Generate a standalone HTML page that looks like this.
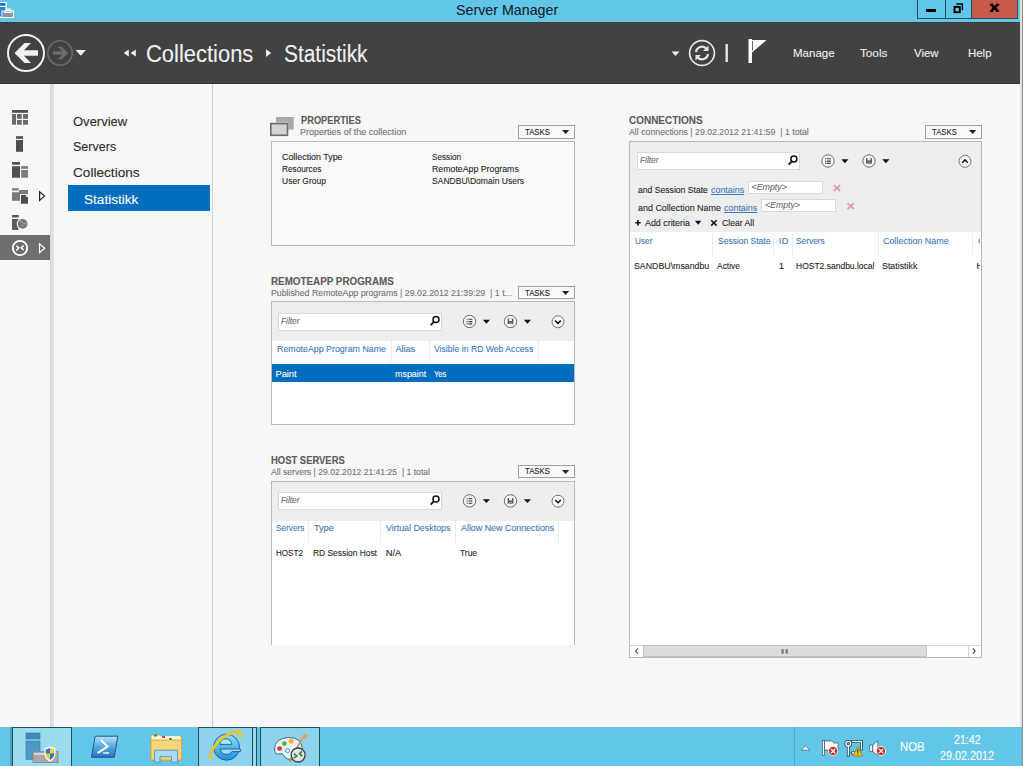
<!DOCTYPE html>
<html><head><meta charset="utf-8"><style>
*{margin:0;padding:0;box-sizing:border-box}
html,body{width:1023px;height:766px;overflow:hidden;background:#f7f7f7;font-family:"Liberation Sans",sans-serif;position:relative}
.a{position:absolute}
.t{position:absolute;white-space:nowrap;line-height:1;-webkit-text-stroke:0.1px currentColor}
.box{position:absolute;border:1px solid #b9b9b9;background:#fff}
.tb{position:absolute;background:#eeeeee}
.tasks{position:absolute;width:57px;height:14px;border:1px solid #9f9f9f;background:#f9f9f9}
.filt{position:absolute;height:18px;border:1px solid #d9d9d9;background:#fff}
.cs{position:absolute;width:1px;background:#ebebeb}
</style></head><body>

<div class="a" style="left:0;top:0;width:1023px;height:22px;background:#62c6e8"></div>
<div class="a" style="left:0;top:22px;width:1020px;height:62px;background:#424242"></div>
<div class="a" style="left:0;top:21px;width:1020px;height:1px;background:#76c0d8"></div>
<div class="a" style="left:0;top:22px;width:1020px;height:1px;background:#353c40"></div>
<div class="a" style="left:0;top:83px;width:1020px;height:1px;background:#363636"></div>
<div class="a" style="left:1020px;top:22px;width:3px;height:705px;background:#e8e8e8"></div>
<div class="a" style="left:50px;top:84px;width:4px;height:643px;background:#e0e0e0;border-left:1px solid #d5d5d5"></div>
<div class="a" style="left:212px;top:84px;width:1px;height:643px;background:#cfcfcf"></div>
<div class="a" style="left:0;top:727px;width:1023px;height:39px;background:#62c6e8"></div>
<div class="a" style="left:68px;top:185px;width:142px;height:26px;background:#006dbf"></div>
<div class="a" style="left:0;top:235px;width:50px;height:25px;background:#6e6e6e"></div>

<div class="tasks" style="left:518px;top:125px"></div>
<div class="box" style="left:271px;top:141px;width:304px;height:105px;background:#f9f9f9"></div>

<div class="tasks" style="left:518px;top:286px;height:13px"></div>
<div class="box" style="left:271px;top:301px;width:304px;height:124px"></div>
<div class="tb" style="left:272px;top:302px;width:302px;height:38.5px"></div>
<div class="filt" style="left:278px;top:313px;width:164px"></div>
<div class="cs" style="left:391px;top:341px;height:22px"></div>
<div class="cs" style="left:429px;top:341px;height:22px"></div>
<div class="cs" style="left:538px;top:341px;height:22px"></div>
<div class="a" style="left:272px;top:364px;width:302px;height:18px;background:#006dbf"></div>

<div class="tasks" style="left:518px;top:465px;height:13px"></div>
<div class="box" style="left:271px;top:481px;width:304px;height:164px;border-bottom:none"></div>
<div class="tb" style="left:272px;top:482px;width:302px;height:38.5px"></div>
<div class="filt" style="left:278px;top:492px;width:164px"></div>
<div class="cs" style="left:308px;top:521px;height:22px"></div>
<div class="cs" style="left:380px;top:521px;height:22px"></div>
<div class="cs" style="left:455px;top:521px;height:22px"></div>
<div class="cs" style="left:558px;top:521px;height:22px"></div>

<div class="tasks" style="left:925px;top:125px"></div>
<div class="box" style="left:629px;top:141px;width:353px;height:517px"></div>
<div class="tb" style="left:630px;top:142px;width:351px;height:90px"></div>
<div class="filt" style="left:637px;top:152px;width:163px"></div>
<div class="a" style="left:748px;top:181px;width:75px;height:13px;border:1px solid #d9d9d9;background:#fff"></div>
<div class="a" style="left:761px;top:199px;width:75px;height:13px;border:1px solid #d9d9d9;background:#fff"></div>
<div class="cs" style="left:712px;top:233px;height:22px"></div>
<div class="cs" style="left:773px;top:233px;height:22px"></div>
<div class="cs" style="left:792px;top:233px;height:22px"></div>
<div class="cs" style="left:878px;top:233px;height:22px"></div>
<div class="cs" style="left:972px;top:233px;height:22px"></div>

<!-- title icon -->
<svg class="a" style="left:0;top:0" width="16" height="22" viewBox="0 0 16 22">
<rect x="-1" y="2" width="8" height="16" fill="#fff"/>
<rect x="-1" y="3" width="6.5" height="2.8" fill="#1a78c9"/>
<rect x="-1" y="7" width="6.5" height="9.5" fill="#2a88d8"/>
<path d="M1.5 10.5h4l1.5-2h3.5l1.5 2h2v7.5h-12.5z" fill="#fff"/>
<rect x="2.3" y="11.3" width="10.5" height="5.7" fill="#8a94a8"/>
<rect x="5.5" y="9.2" width="4" height="1.5" fill="#fff"/>
<path d="M3 11.5h9.5l-1.5 1.6h-6.5z" fill="#fff"/>
</svg>
<!-- window controls -->
<div class="a" style="left:917px;top:0;width:29px;height:19px;border:1px solid #1d4f60;border-top:none;background:#62c6e8"></div>
<div class="a" style="left:946px;top:0;width:26px;height:19px;border:1px solid #1d4f60;border-top:none;border-left:none;background:#62c6e8"></div>
<div class="a" style="left:972px;top:0;width:46px;height:19px;border:1px solid #3f4a50;border-top:none;border-left:none;background:#c75a4a"></div>
<div class="a" style="left:926px;top:9px;width:10px;height:3px;background:#000"></div>
<svg class="a" style="left:952px;top:2px" width="12" height="12" viewBox="0 0 12 12"><path d="M4.4 2h6v6.3" fill="none" stroke="#000" stroke-width="1.3"/><rect x="2.5" y="4.9" width="5.3" height="5.3" fill="#62c6e8" stroke="#000" stroke-width="1.9"/></svg>
<svg class="a" style="left:989px;top:3px" width="11" height="10" viewBox="0 0 11 10"><path d="M2.2 1.4l6.6 6.8M8.8 1.4l-6.6 6.8" stroke="#000" stroke-width="2.6"/><path d="M0.8 0.8h3v1.6h-3zM7.2 0.8h3v1.6h-3zM0.8 7.4h3v1.6h-3zM7.2 7.4h3v1.6h-3z" fill="#000"/></svg>
<!-- header icons -->
<svg class="a" style="left:0;top:22px" width="100" height="62" viewBox="0 22 100 62">
<circle cx="26" cy="53" r="18" fill="none" stroke="#f2f2f2" stroke-width="2"/>
<path d="M14.5 53l10-10h6.5l-7 7.3h14v5.4h-14l7 7.3h-6.5z" fill="#f0f0f0"/>
<circle cx="60" cy="53" r="12.2" fill="none" stroke="#6b6b6b" stroke-width="1.6"/>
<path d="M68 53l-6.5-6.5h-4l4.8 4.8h-9.3v3.4h9.3l-4.8 4.8h4z" fill="#6b6b6b"/>
<path d="M75.5 50h10.5l-5.25 5.8z" fill="#f0f0f0"/>
<path d="M130 49.5v7l-4.5-3.5zM136 49.5v7l-4.5-3.5z" fill="#f0f0f0"/>
</svg>
<svg class="a" style="left:120px;top:40px" width="160" height="30" viewBox="120 40 160 30">
<path d="M128.8 49.6v7l-5.2-3.5zM135.8 49.6v7l-5.2-3.5z" fill="#f0f0f0"/>
<path d="M266 49.3v7.6l5.2-3.8z" fill="#f0f0f0"/>
</svg>
<svg class="a" style="left:660px;top:30px" width="120" height="45" viewBox="660 30 120 45">
<path d="M671.5 51.5h8l-4 4.5z" fill="#f0f0f0"/>
<circle cx="702" cy="53" r="12.4" fill="none" stroke="#e6e6e6" stroke-width="1.7"/>
<path d="M696 52a6 6 0 0 1 10.5-3.2" fill="none" stroke="#e6e6e6" stroke-width="2.2"/>
<path d="M708.5 45.5v5.5h-5.5z" fill="#e6e6e6"/>
<path d="M708 54a6 6 0 0 1-10.5 3.2" fill="none" stroke="#e6e6e6" stroke-width="2.2"/>
<path d="M695.5 60.5v-5.5h5.5z" fill="#e6e6e6"/>
<rect x="725.5" y="44" width="2.4" height="18" fill="#e6e6e6"/>
<rect x="748.5" y="39" width="3.5" height="24" fill="#fff"/>
<path d="M752 40h14.5l-14.5 12.5z" fill="#fff"/>
<rect x="752" y="41" width="0.9" height="9.5" fill="#555"/>
</svg>


<!-- left strip icons -->
<svg class="a" style="left:0;top:100px" width="50" height="165" viewBox="0 100 50 165">
<rect x="12" y="110" width="16" height="2.8" fill="#4f4f4f"/>
<rect x="12" y="114" width="4" height="10.7" fill="#6a6a6a"/>
<rect x="17" y="114" width="4.8" height="4.8" fill="#6a6a6a"/>
<rect x="23" y="114" width="5" height="4.8" fill="#6a6a6a"/>
<rect x="17" y="120" width="4.8" height="4.7" fill="#6a6a6a"/>
<rect x="23" y="120" width="5" height="4.7" fill="#6a6a6a"/>
<rect x="16" y="136.2" width="7" height="2.6" fill="#4f4f4f"/>
<rect x="16" y="140" width="7" height="11.8" fill="#4f4f4f"/>
<rect x="12" y="162" width="8" height="2.7" fill="#4f4f4f"/>
<rect x="12" y="166.2" width="8" height="11.5" fill="#4f4f4f"/>
<rect x="21.2" y="166.2" width="6.8" height="2.6" fill="#777"/>
<rect x="21.2" y="170" width="6.8" height="7.7" fill="#7a7a7a"/>
<rect x="12" y="188.2" width="6.7" height="2.3" fill="#7a7a7a"/>
<path d="M12 192.3h6.5l1-2.3h8.5v10.8h-16z" fill="#7a7a7a"/>
<rect x="20" y="194.1" width="9" height="10.6" fill="#f7f7f7"/>
<path d="M21 195.1h5l2 2v6.6h-7z" fill="#4f4f4f"/>
<path d="M26 195.1v2h2z" fill="#eee"/>
<path d="M39.6 191.8v8.6l5-4.3z" fill="none" stroke="#222" stroke-width="1.2"/>
<rect x="12" y="215" width="6.75" height="2.5" fill="#5a5a5a"/>
<rect x="12" y="219" width="6.75" height="10.9" fill="#5a5a5a"/>
<circle cx="22.6" cy="223.9" r="6" fill="#f7f7f7"/>
<circle cx="22.6" cy="223.9" r="4.9" fill="#7a7a7a"/>
<path d="M19.5 221.5q2 -1 3 1t2 1q1.5 -1 2 1M21 226q1 -1.5 2.5 0" fill="none" stroke="#a5a5a5" stroke-width="1"/>
<circle cx="20" cy="248" r="7.2" fill="none" stroke="#fff" stroke-width="1.8"/>
<path d="M16.3 245.7l2.5 2.2-2.5 2.5M23.7 245.6l-2.5 2.2 2.5 2.3" fill="none" stroke="#fff" stroke-width="1.4"/>
<path d="M39.5 243.8v8.8l5.2-4.4z" fill="none" stroke="#fff" stroke-width="1.2"/>
</svg>


<svg class="a" style="left:561.9px;top:129.9px" width="8" height="5" viewBox="0 0 8 5"><path d="M0 0h7.2l-3.6 4z" fill="#222"/></svg>
<svg class="a" style="left:561.9px;top:290.8px" width="8" height="5" viewBox="0 0 8 5"><path d="M0 0h7.2l-3.6 4z" fill="#222"/></svg>
<svg class="a" style="left:561.9px;top:469.8px" width="8" height="5" viewBox="0 0 8 5"><path d="M0 0h7.2l-3.6 4z" fill="#222"/></svg>
<svg class="a" style="left:968.7px;top:130.1px" width="8" height="5" viewBox="0 0 8 5"><path d="M0 0h7.2l-3.6 4z" fill="#222"/></svg>

<!-- panel icons -->
<svg class="a" style="left:0;top:0;pointer-events:none" width="1023" height="766">
<circle cx="436.0" cy="319.59999999999997" r="3" fill="none" stroke="#111" stroke-width="1.5"/>
<path d="M433.9 321.8l-3.2 3.4" stroke="#111" stroke-width="1.9"/>
<circle cx="469.5" cy="321.5" r="6.2" fill="#f7f7f7" stroke="#5a5a5a" stroke-width="0.9"/>
<path d="M466.6 319.3h1.1M466.6 321.6h1.1M466.6 323.9h1.1M468.5 319.3h3.8M468.5 321.6h3.8M468.5 323.9h3.8" stroke="#333" stroke-width="1.1"/>
<path d="M482.8 319.8h7.2l-3.6 3.9z" fill="#111"/>
<circle cx="510.5" cy="321.5" r="6.2" fill="#f7f7f7" stroke="#5a5a5a" stroke-width="0.9"/>
<path d="M507.6 318.6h5.8v5.5h-5.8z" fill="#505050"/>
<path d="M508.9 318.6h3.2v2.4h-3.2z" fill="#f0f0f0"/>
<path d="M508.8 322.3h3.4v1.8h-3.4z" fill="#8a8a8a"/>
<path d="M523.8 319.8h7.2l-3.6 3.9z" fill="#111"/>
<circle cx="558" cy="321.8" r="6" fill="#fafafa" stroke="#666" stroke-width="0.9"/>
<path d="M555.2 320.6l2.8 2.8 2.8-2.8" fill="none" stroke="#111" stroke-width="1.5"/></svg>
<svg class="a" style="left:0;top:0;pointer-events:none" width="1023" height="766">
<circle cx="436.0" cy="498.99999999999994" r="3" fill="none" stroke="#111" stroke-width="1.5"/>
<path d="M433.9 501.2l-3.2 3.4" stroke="#111" stroke-width="1.9"/>
<circle cx="469.5" cy="500.9" r="6.2" fill="#f7f7f7" stroke="#5a5a5a" stroke-width="0.9"/>
<path d="M466.6 498.7h1.1M466.6 501.0h1.1M466.6 503.29999999999995h1.1M468.5 498.7h3.8M468.5 501.0h3.8M468.5 503.29999999999995h3.8" stroke="#333" stroke-width="1.1"/>
<path d="M482.8 499.2h7.2l-3.6 3.9z" fill="#111"/>
<circle cx="510.5" cy="500.9" r="6.2" fill="#f7f7f7" stroke="#5a5a5a" stroke-width="0.9"/>
<path d="M507.6 498.0h5.8v5.5h-5.8z" fill="#505050"/>
<path d="M508.9 498.0h3.2v2.4h-3.2z" fill="#f0f0f0"/>
<path d="M508.8 501.7h3.4v1.8h-3.4z" fill="#8a8a8a"/>
<path d="M523.8 499.2h7.2l-3.6 3.9z" fill="#111"/>
<circle cx="558" cy="501.2" r="6" fill="#fafafa" stroke="#666" stroke-width="0.9"/>
<path d="M555.2 500.0l2.8 2.8 2.8-2.8" fill="none" stroke="#111" stroke-width="1.5"/></svg>
<svg class="a" style="left:0;top:0;pointer-events:none" width="1023" height="766">
<circle cx="793.9" cy="159.1" r="3" fill="none" stroke="#111" stroke-width="1.5"/>
<path d="M791.8000000000001 161.29999999999998l-3.2 3.4" stroke="#111" stroke-width="1.9"/>
<circle cx="828" cy="161.0" r="6.2" fill="#f7f7f7" stroke="#5a5a5a" stroke-width="0.9"/>
<path d="M825.1 158.8h1.1M825.1 161.1h1.1M825.1 163.4h1.1M827 158.8h3.8M827 161.1h3.8M827 163.4h3.8" stroke="#333" stroke-width="1.1"/>
<path d="M841.3 159.3h7.2l-3.6 3.9z" fill="#111"/>
<circle cx="869" cy="161.0" r="6.2" fill="#f7f7f7" stroke="#5a5a5a" stroke-width="0.9"/>
<path d="M866.1 158.1h5.8v5.5h-5.8z" fill="#505050"/>
<path d="M867.4 158.1h3.2v2.4h-3.2z" fill="#f0f0f0"/>
<path d="M867.3 161.8h3.4v1.8h-3.4z" fill="#8a8a8a"/>
<path d="M882.3 159.3h7.2l-3.6 3.9z" fill="#111"/>
<circle cx="965" cy="161.3" r="6" fill="#fafafa" stroke="#666" stroke-width="0.9"/>
<path d="M962.2 162.7l2.8-2.8 2.8 2.8" fill="none" stroke="#111" stroke-width="1.5"/></svg>

<svg class="a" style="left:0;top:0" width="1023" height="766">
<rect x="276" y="117" width="17.7" height="12.6" fill="#a9a9a9"/>
<rect x="270" y="122.5" width="18.3" height="13.6" fill="#f7f7f7"/>
<rect x="270.8" y="123.6" width="16.7" height="11.7" fill="#d3d3d3" stroke="#6b6b6b" stroke-width="1.6"/>
<path d="M833.8 185.2l6.3 5.8M840.1 185.2l-6.3 5.8" stroke="#e69a9a" stroke-width="1.7"/>
<path d="M847.5 203.2l6.3 5.8M853.8 203.2l-6.3 5.8" stroke="#e69a9a" stroke-width="1.7"/>
<path d="M635.3 222.8h5.4M638 220v5.6" stroke="#111" stroke-width="1.6"/>
<path d="M694.9 220.7h6.4l-3.2 4z" fill="#111"/>
<path d="M711.2 220.2l5.4 5.4M716.6 220.2l-5.4 5.4" stroke="#111" stroke-width="1.5"/>
</svg>


<!-- scrollbar -->
<div class="a" style="left:630px;top:645px;width:351px;height:12px;background:#fff;border-top:1px solid #d4d4d4"></div>
<div class="a" style="left:643px;top:645px;width:284px;height:12px;background:#dcdcdc;border:1px solid #c2c2c2"></div>
<div class="a" style="left:968px;top:645px;width:1px;height:12px;background:#d4d4d4"></div>
<svg class="a" style="left:625px;top:640px" width="360" height="20" viewBox="625 640 360 20">
<path d="M638 648.3l-2.3 2.75 2.3 2.75" fill="none" stroke="#555" stroke-width="1.2"/>
<path d="M972.8 648.3l2.3 2.75-2.3 2.75" fill="none" stroke="#555" stroke-width="1.2"/>
<rect x="781.5" y="649.2" width="2.2" height="4.5" fill="#777"/>
<rect x="785.6" y="649.2" width="2.2" height="4.5" fill="#777"/>
</svg>
<!-- right edge -->
<div class="a" style="left:1020px;top:0;width:1.5px;height:727px;background:#e2e2da"></div>
<div class="a" style="left:1021.5px;top:0;width:1.5px;height:766px;background:#8a8a8a"></div>
<!-- taskbar buttons -->
<div class="a" style="left:0;top:727px;width:1020px;height:1px;background:#7fbdd3"></div>
<div class="a" style="left:794px;top:727px;width:1px;height:39px;background:#55a9cc"></div>
<div class="a" style="left:10px;top:727px;width:2px;height:39px;background:#4f9fbf"></div>
<div class="a" style="left:12px;top:727px;width:60px;height:39px;background:#9cdaee;border:1px solid #1f4d5e;border-bottom:none"></div>
<div class="a" style="left:198px;top:727px;width:55px;height:39px;background:#8dd3ec;border:1px solid #1f4d5e;border-bottom:none"></div>
<div class="a" style="left:253px;top:727px;width:4px;height:39px;background:#9adaef;border-right:1px solid #1f4d5e;border-top:1px solid #1f4d5e"></div>
<div class="a" style="left:260px;top:727px;width:60px;height:39px;background:#8dd3ec;border:1px solid #1f4d5e;border-bottom:none"></div>
<svg class="a" style="left:0;top:727px" width="1023" height="39" viewBox="0 727 1023 39">
<defs>
<linearGradient id="ps" x1="0" y1="0" x2="0" y2="1"><stop offset="0" stop-color="#b6e4f8"/><stop offset="0.45" stop-color="#5fb0e0"/><stop offset="1" stop-color="#2a6fc0"/></linearGradient>
<linearGradient id="fd" x1="0" y1="0" x2="0" y2="1"><stop offset="0" stop-color="#fdf0b8"/><stop offset="1" stop-color="#eec45a"/></linearGradient>
<linearGradient id="ie" x1="0" y1="0" x2="0" y2="1"><stop offset="0" stop-color="#8fe0fb"/><stop offset="1" stop-color="#1e8fd8"/></linearGradient>
</defs>
<!-- server manager icon -->
<rect x="26" y="733" width="14" height="6" fill="#3f8cbc" stroke="#2f78a8" stroke-width="0.6"/>
<path d="M26 741h14v13.5h-7.5v5h-6.5z" fill="#4a9ac8" stroke="#2f78a8" stroke-width="0.6"/>
<rect x="33" y="751.5" width="25" height="11" fill="#a9a9a9" stroke="#888" stroke-width="0.8"/>
<rect x="34" y="753" width="12" height="2" fill="#d6d6d6"/>
<path d="M50 746.5l5.5 1.8v5.5q0 5 -5.5 8q-5.5 -3 -5.5 -8v-5.5z" fill="#fff"/>
<path d="M50 748l4.3 1.4v4.4q0 4 -4.3 6.3q-4.3 -2.3 -4.3 -6.3v-4.4z" fill="#f2cf2a"/>
<path d="M50 748v5.5h-4.3v-4.1zM50 753.5h4.3q0 4 -4.3 6.6z" fill="#2a7ad6"/>
<!-- powershell -->
<path d="M95.2 736.2h22.6l-3.5 21.1h-22.8z" fill="url(#ps)" stroke="#1e5a90" stroke-width="1"/>
<path d="M101 740l6.5 6.6-10 6.6" fill="none" stroke="#fff" stroke-width="2"/>
<path d="M103 753h6" stroke="#d8f0ff" stroke-width="1.6"/>
<!-- folder -->
<path d="M151 735h9l1.5 1.5h20v23.7h-30.5z" fill="url(#fd)" stroke="#d0a040" stroke-width="0.8"/>
<rect x="152" y="736" width="28" height="3.5" fill="#fff6d6"/>
<rect x="154" y="734.5" width="3" height="2" fill="#2c9a2c"/>
<rect x="162" y="736" width="3" height="2" fill="#c0502a"/>
<rect x="169" y="738" width="3" height="2" fill="#4a7aa0"/>
<path d="M151 740h30.5v20h-30.5z" fill="#f5d67a" stroke="#d0a040" stroke-width="0.8"/>
<path d="M154.5 750.2h23v12h-6v-5.5h-11.5v5.5h-5.5z" fill="#a8dcf2" stroke="#4a8ab8" stroke-width="0.8"/>
<!-- IE -->
<ellipse cx="226.5" cy="747.2" rx="13" ry="13" fill="url(#ie)" stroke="#1a5a9a" stroke-width="0.9"/>
<path d="M220 744.4a5.9 5.6 0 0 1 11.8 0z" fill="#a8e6f8" stroke="#1a5a9a" stroke-width="0.9"/>
<path d="M220.4 749h20v2.6h-8.2q-2.5 3 -6 2.8q-5.2 -0.2 -5.8 -5.4z" fill="#9fdcf0" stroke="#1a5a9a" stroke-width="0.9"/>
<path d="M211.5 759.5q-3 -4 3 -13q7 -10 17 -13.5q7 -2.5 8.5 0q1 2 -0.5 4.5" fill="none" stroke="#f5c41a" stroke-width="2.8"/>
<!-- paint -->
<path d="M274.5 749Q275 738.5 288 737.5Q301.5 737 302.5 749Q303 759.5 292 759.5Q285.5 759.5 284 755.8Q283.2 752.8 279.8 753.8Q274.3 755.2 274.5 749z" fill="#e9f0f6" stroke="#34607e" stroke-width="0.9"/>
<circle cx="279.6" cy="748.6" r="2.4" fill="#d63a3a"/>
<circle cx="284.4" cy="743.6" r="2.4" fill="#46b446"/>
<circle cx="291.2" cy="741.3" r="2.5" fill="#f2b52a"/>
<circle cx="287.6" cy="750.6" r="2" fill="none" stroke="#4a9ad0" stroke-width="1"/>
<path d="M289.5 761.5L301.5 740" stroke="#c8904a" stroke-width="1.8"/>
<path d="M300 740.5l2.3-4.5q2-3 4.5-1.5q1.5 1.5-0.5 3.5z" fill="#d6a466"/>
<circle cx="298.1" cy="755" r="7" fill="#e6e6e6" stroke="#38434c" stroke-width="1.3"/>
<path d="M294 753.6l2.7 2.3-2.7 2.3M302.2 751.4l-2.7 2.3 2.7 2.3" fill="none" stroke="#2a8a3a" stroke-width="1.7"/>
<!-- tray -->
<path d="M801.3 750.2l4.2-4.7 4.2 4.7z" fill="#fff" stroke="#3a5a6a" stroke-width="0.7"/>
<rect x="822.3" y="740.5" width="2.2" height="15" fill="#fff" stroke="#1a3a4a" stroke-width="0.6"/>
<path d="M824.5 741h8l1.5 2h4v7h-13.5z" fill="#fff" stroke="#1a3a4a" stroke-width="0.6"/>
<circle cx="833.1" cy="751" r="4.6" fill="#d02a2a" stroke="#fff" stroke-width="0.8"/>
<path d="M831 749l4.2 4.2M835.2 749l-4.2 4.2" stroke="#fff" stroke-width="1.3"/>
<g fill="none" stroke-linecap="square">
<circle cx="848.3" cy="743.8" r="2.4" stroke="#1a3a4a" stroke-width="2.8"/>
<path d="M848.3 746.5v8.6M852.5 741.5h9v7.5M852.5 753h2.5" stroke="#1a3a4a" stroke-width="2.8"/>
<circle cx="848.3" cy="743.8" r="2.4" stroke="#fff" stroke-width="1.3"/>
<path d="M848.3 746.5v8.6M852.5 741.5h9v7.5M852.5 753h2.5" stroke="#fff" stroke-width="1.3"/>
</g>
<path d="M857.8 746.6l4.8 9.5h-9.6z" fill="#f2c418" stroke="#8a6a00" stroke-width="0.6"/>
<path d="M857.8 749.5v3.3M857.8 753.8v1" stroke="#222" stroke-width="1.1"/>
<rect x="869.8" y="745" width="3" height="6.5" fill="#fff" stroke="#1a3a4a" stroke-width="0.6"/>
<path d="M872.8 745l5-4.2v14.6l-5-3.9z" fill="#fff" stroke="#1a3a4a" stroke-width="0.6"/>
<circle cx="881" cy="751" r="4.6" fill="#d02a2a" stroke="#fff" stroke-width="0.8"/>
<path d="M878.9 748.9l4.2 4.2M883.1 748.9l-4.2 4.2" stroke="#fff" stroke-width="1.3"/>
</svg>

<div class="t" style="left:456.40px;top:3.11px;font-size:14.4px;color:#15222a;transform:scaleX(0.9903);transform-origin:0 0">Server Manager</div>
<div class="t" style="left:146.40px;top:43.11px;font-size:23.5px;color:#f0f0f0;transform:scaleX(0.9339);transform-origin:0 0">Collections</div>
<div class="t" style="left:284.20px;top:43.11px;font-size:23.5px;color:#f0f0f0;transform:scaleX(0.8884);transform-origin:0 0">Statistikk</div>
<div class="t" style="left:793.00px;top:47.91px;font-size:11.8px;color:#f0f0f0;transform:scaleX(0.9767);transform-origin:0 0">Manage</div>
<div class="t" style="left:860.20px;top:47.91px;font-size:11.8px;color:#f0f0f0;transform:scaleX(0.9929);transform-origin:0 0">Tools</div>
<div class="t" style="left:914.30px;top:47.91px;font-size:11.8px;color:#f0f0f0;transform:scaleX(0.9692);transform-origin:0 0">View</div>
<div class="t" style="left:967.80px;top:47.91px;font-size:11.8px;color:#f0f0f0;transform:scaleX(0.9680);transform-origin:0 0">Help</div>
<div class="t" style="left:72.80px;top:114.77px;font-size:13.5px;color:#2c2c2c;transform:scaleX(0.9638);transform-origin:0 0">Overview</div>
<div class="t" style="left:72.60px;top:140.37px;font-size:13.5px;color:#2c2c2c;transform:scaleX(0.9277);transform-origin:0 0">Servers</div>
<div class="t" style="left:72.60px;top:166.47px;font-size:13.5px;color:#2c2c2c;transform:scaleX(1.0091);transform-origin:0 0">Collections</div>
<div class="t" style="left:84.30px;top:192.57px;font-size:13.5px;color:#fff;transform:scaleX(1.0073);transform-origin:0 0">Statistikk</div>
<div class="t" style="left:300.60px;top:114.91px;font-size:10.5px;color:#5b5b5b;transform:scaleX(0.8838);transform-origin:0 0;font-weight:bold">PROPERTIES</div>
<div class="t" style="left:270.60px;top:275.81px;font-size:10.5px;color:#5b5b5b;transform:scaleX(0.9366);transform-origin:0 0;font-weight:bold">REMOTEAPP PROGRAMS</div>
<div class="t" style="left:270.80px;top:454.81px;font-size:10.5px;color:#5b5b5b;transform:scaleX(0.8988);transform-origin:0 0;font-weight:bold">HOST SERVERS</div>
<div class="t" style="left:628.90px;top:114.81px;font-size:10.5px;color:#5b5b5b;transform:scaleX(0.9500);transform-origin:0 0;font-weight:bold">CONNECTIONS</div>
<div class="t" style="left:300.30px;top:127.81px;font-size:9.2px;color:#717171;transform:scaleX(0.9824);transform-origin:0 0">Properties of the collection</div>
<div class="t" style="left:270.60px;top:289.41px;font-size:9.2px;color:#717171;transform:scaleX(0.9540);transform-origin:0 0;white-space:pre">Published RemoteApp programs | 29.02.2012 21:39:29  | 1 t...</div>
<div class="t" style="left:270.80px;top:468.11px;font-size:9.2px;color:#717171;transform:scaleX(0.9365);transform-origin:0 0;white-space:pre">All servers | 29.02.2012 21:41:25  | 1 total</div>
<div class="t" style="left:628.90px;top:128.11px;font-size:9.2px;color:#717171;transform:scaleX(0.9529);transform-origin:0 0;white-space:pre">All connections | 29.02.2012 21:41:59  | 1 total</div>
<div class="t" style="left:524.80px;top:127.83px;font-size:9.3px;color:#202020;transform:scaleX(0.8367);transform-origin:0 0">TASKS</div>
<div class="t" style="left:524.80px;top:288.83px;font-size:9.3px;color:#202020;transform:scaleX(0.8367);transform-origin:0 0">TASKS</div>
<div class="t" style="left:524.80px;top:466.83px;font-size:9.3px;color:#202020;transform:scaleX(0.8367);transform-origin:0 0">TASKS</div>
<div class="t" style="left:932.00px;top:127.73px;font-size:9.3px;color:#202020;transform:scaleX(0.8333);transform-origin:0 0">TASKS</div>
<div class="t" style="left:281.20px;top:316.83px;font-size:9.3px;color:#6a6a6a;transform:scaleX(0.8909);transform-origin:0 0;font-style:italic">Filter</div>
<div class="t" style="left:281.20px;top:495.83px;font-size:9.3px;color:#6a6a6a;transform:scaleX(0.8909);transform-origin:0 0;font-style:italic">Filter</div>
<div class="t" style="left:640.40px;top:155.83px;font-size:9.3px;color:#6a6a6a;transform:scaleX(0.8909);transform-origin:0 0;font-style:italic">Filter</div>
<div class="t" style="left:282.40px;top:151.94px;font-size:9.4px;color:#1e1e1e;transform:scaleX(0.9469);transform-origin:0 0">Collection Type</div>
<div class="t" style="left:282.40px;top:164.04px;font-size:9.4px;color:#1e1e1e;transform:scaleX(0.8800);transform-origin:0 0">Resources</div>
<div class="t" style="left:282.40px;top:175.74px;font-size:9.4px;color:#1e1e1e;transform:scaleX(0.9082);transform-origin:0 0">User Group</div>
<div class="t" style="left:432.40px;top:152.04px;font-size:9.4px;color:#1e1e1e;transform:scaleX(0.8727);transform-origin:0 0">Session</div>
<div class="t" style="left:432.40px;top:164.04px;font-size:9.4px;color:#1e1e1e;transform:scaleX(0.9355);transform-origin:0 0">RemoteApp Programs</div>
<div class="t" style="left:432.40px;top:175.74px;font-size:9.4px;color:#1e1e1e;transform:scaleX(0.9108);transform-origin:0 0">SANDBU\Domain Users</div>
<div class="t" style="left:276.60px;top:345.23px;font-size:9.3px;color:#3b78b8;transform:scaleX(0.9496);transform-origin:0 0">RemoteApp Program Name</div>
<div class="t" style="left:395.40px;top:345.23px;font-size:9.3px;color:#3b78b8;letter-spacing:-0.1px">Alias</div>
<div class="t" style="left:434.40px;top:345.23px;font-size:9.3px;color:#3b78b8;transform:scaleX(0.9308);transform-origin:0 0">Visible in RD Web Access</div>
<div class="t" style="left:275.60px;top:368.94px;font-size:9.4px;color:#fff;letter-spacing:-0.1px">Paint</div>
<div class="t" style="left:394.60px;top:368.94px;font-size:9.4px;color:#fff;transform:scaleX(0.9515);transform-origin:0 0">mspaint</div>
<div class="t" style="left:434.40px;top:368.94px;font-size:9.4px;color:#fff;transform:scaleX(0.8063);transform-origin:0 0">Yes</div>
<div class="t" style="left:276.20px;top:524.23px;font-size:9.3px;color:#3b78b8;transform:scaleX(0.8844);transform-origin:0 0">Servers</div>
<div class="t" style="left:314.00px;top:524.23px;font-size:9.3px;color:#3b78b8;letter-spacing:-0.1px">Type</div>
<div class="t" style="left:386.10px;top:524.23px;font-size:9.3px;color:#3b78b8;transform:scaleX(0.9544);transform-origin:0 0">Virtual Desktops</div>
<div class="t" style="left:460.60px;top:524.23px;font-size:9.3px;color:#3b78b8;transform:scaleX(0.9541);transform-origin:0 0">Allow New Connections</div>
<div class="t" style="left:275.90px;top:548.04px;font-size:9.4px;color:#1e1e1e;transform:scaleX(0.8613);transform-origin:0 0">HOST2</div>
<div class="t" style="left:313.30px;top:548.04px;font-size:9.4px;color:#1e1e1e;transform:scaleX(0.8958);transform-origin:0 0">RD Session Host</div>
<div class="t" style="left:385.80px;top:548.04px;font-size:9.4px;color:#1e1e1e;letter-spacing:-0.1px">N/A</div>
<div class="t" style="left:459.70px;top:548.04px;font-size:9.4px;color:#1e1e1e;transform:scaleX(0.9000);transform-origin:0 0">True</div>
<div class="t" style="left:637.80px;top:185.04px;font-size:9.4px;color:#1e1e1e;transform:scaleX(0.9184);transform-origin:0 0">and Session State</div>
<div class="t" style="left:710.70px;top:185.04px;font-size:9.4px;color:#3b78b8;transform:scaleX(0.9486);transform-origin:0 0;text-decoration:underline">contains</div>
<div class="t" style="left:751.60px;top:183.45px;font-size:8.8px;color:#6a6a6a;font-style:italic">&lt;Empty&gt;</div>
<div class="t" style="left:637.80px;top:203.04px;font-size:9.4px;color:#1e1e1e;transform:scaleX(0.9529);transform-origin:0 0">and Collection Name</div>
<div class="t" style="left:724.30px;top:203.04px;font-size:9.4px;color:#3b78b8;transform:scaleX(0.9514);transform-origin:0 0;text-decoration:underline">contains</div>
<div class="t" style="left:765.00px;top:201.05px;font-size:8.8px;color:#6a6a6a;transform:scaleX(0.9914);transform-origin:0 0;font-style:italic">&lt;Empty&gt;</div>
<div class="t" style="left:645.30px;top:217.84px;font-size:9.4px;color:#1e1e1e;transform:scaleX(0.9458);transform-origin:0 0">Add criteria</div>
<div class="t" style="left:721.70px;top:217.84px;font-size:9.4px;color:#1e1e1e;transform:scaleX(0.9229);transform-origin:0 0">Clear All</div>
<div class="t" style="left:634.70px;top:237.13px;font-size:9.3px;color:#3b78b8;transform:scaleX(0.8850);transform-origin:0 0">User</div>
<div class="t" style="left:717.60px;top:237.13px;font-size:9.3px;color:#3b78b8;transform:scaleX(0.9140);transform-origin:0 0">Session State</div>
<div class="t" style="left:778.80px;top:237.13px;font-size:9.3px;color:#3b78b8;letter-spacing:0.3px">ID</div>
<div class="t" style="left:796.30px;top:237.13px;font-size:9.3px;color:#3b78b8;transform:scaleX(0.8969);transform-origin:0 0">Servers</div>
<div class="t" style="left:883.00px;top:237.13px;font-size:9.3px;color:#3b78b8;transform:scaleX(0.9647);transform-origin:0 0">Collection Name</div>
<div class="t" style="left:634.00px;top:260.84px;font-size:9.4px;color:#1e1e1e;transform:scaleX(0.9375);transform-origin:0 0">SANDBU\msandbu</div>
<div class="t" style="left:717.00px;top:260.84px;font-size:9.4px;color:#1e1e1e;transform:scaleX(0.9000);transform-origin:0 0">Active</div>
<div class="t" style="left:778.80px;top:260.84px;font-size:9.4px;color:#1e1e1e">1</div>
<div class="t" style="left:795.60px;top:260.84px;font-size:9.4px;color:#1e1e1e;transform:scaleX(0.9069);transform-origin:0 0">HOST2.sandbu.local</div>
<div class="t" style="left:882.40px;top:260.84px;font-size:9.4px;color:#1e1e1e;transform:scaleX(0.9421);transform-origin:0 0">Statistikk</div>
<div class="t" style="left:899.80px;top:741.33px;font-size:12.6px;color:#fff;transform:scaleX(0.9000);transform-origin:0 0">NOB</div>
<div class="t" style="left:953.70px;top:733.57px;font-size:12.2px;color:#fff;transform:scaleX(0.8742);transform-origin:0 0">21:42</div>
<div class="t" style="left:940.00px;top:750.47px;font-size:12.2px;color:#fff;transform:scaleX(0.8852);transform-origin:0 0">29.02.2012</div>


<div class="a" style="left:630px;top:233px;width:350px;height:60px;overflow:hidden">
<div class="t" style="left:348px;top:4.1px;font-size:9.3px;color:#3b78b8">C</div>
<div class="t" style="left:346.5px;top:27.9px;font-size:9.4px;color:#1e1e1e">H</div>
</div>

</body></html>
